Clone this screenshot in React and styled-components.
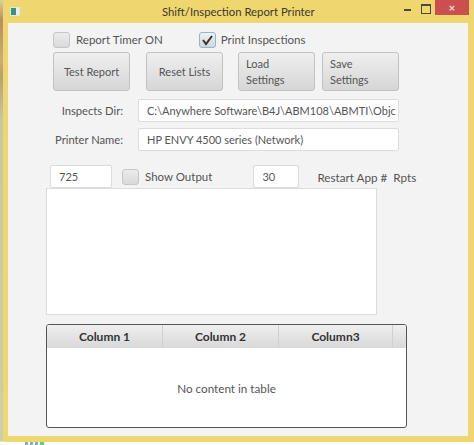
import React from 'react';
import styled, { createGlobalStyle } from 'styled-components';

const Global = createGlobalStyle`
  html, body { margin: 0; padding: 0; background: #ffffff; }
  body { width: 474px; height: 445px; overflow: hidden; font-family: Lato, "Noto Sans", sans-serif; }
  * { box-sizing: border-box; }
`;

const Desktop = styled.div`
  width: 474px;
  height: 445px;
  padding-left: 3px;
  background: linear-gradient(to bottom, #d8d0a0 0, #b98f5c 20px, #c9b070 60px, #b8a070 75px, #c4c8a8 120px, #c7d0b0 441px, #ffffff 442px);
`;

const Frame = styled.div`
  width: 471px;
  height: 442px;
  background: #efd66f;
  display: flex;
  flex-direction: column;
`;

const TitleBar = styled.div`
  height: 23px;
  flex: none;
  display: flex;
  align-items: center;
  position: relative;
`;

const AppIcon = styled.div`
  width: 10px;
  height: 9px;
  margin-left: 7px;
  margin-top: -1px;
  background: linear-gradient(to right, #3f8f83 0 60%, #e8eef0 60%);
  border: 1px solid #dfe6e6;
`;

const Title = styled.div`
  position: absolute;
  left: 159px;
  top: 3px;
  font-size: 11.3px;
  line-height: 17px;
  color: #3c3a2c;
  white-space: nowrap;
`;

const Controls = styled.div`
  margin-left: auto;
  margin-right: 5px;
  height: 15px;
  align-self: flex-start;
  display: flex;
`;

const MinButton = styled.div`
  width: 17px;
  position: relative;
  &::after { content: ''; position: absolute; left: 0; top: 9px; width: 7px; height: 2px; background: #4a4a3c; }
`;

const MaxButton = styled.div`
  width: 14px;
  position: relative;
  &::after { content: ''; position: absolute; left: 0; top: 4px; width: 8px; height: 7px; border: 1px solid #4a4a3c; border-top-width: 2px; }
`;

const CloseButton = styled.div`
  width: 34px;
  background: #c9504f;
  color: #f6e4e0;
  font-size: 11px;
  font-weight: 700;
  line-height: 15px;
  text-align: center;
`;

const Body = styled.div`
  width: 460px;
  height: 413px;
  margin-left: 5px;
  background: #f3f3f3;
  padding: 9px 0 0 38px;
  color: #555555;
  font-size: 11.5px;
`;

const Row = styled.div`
  display: flex;
  align-items: center;
`;

const CheckRow = styled(Row)`
  height: 16px;
  margin-left: 7px;
`;

const CheckBox = styled.span`
  width: 17px;
  height: 16px;
  flex: none;
  margin-left: ${p => p.$ml || 0}px;
  border-radius: 3px;
  border: 1px solid ${p => (p.$checked ? '#7fbcd8' : '#c6c6c6')};
  background: ${p => (p.$checked ? 'linear-gradient(#f1f1f1, #d6d6d6)' : 'linear-gradient(#ececec, #d9d9d9)')};
  display: flex;
  align-items: center;
  justify-content: center;
`;

const CheckText = styled.span`
  margin-left: ${p => p.$gap || 6}px;
  line-height: 16px;
  white-space: nowrap;
`;

const ButtonRow = styled(Row)`
  margin: 4px 0 0 7px;
  height: 39px;
`;

const Button = styled.div`
  width: ${p => p.$w}px;
  height: 39px;
  margin-left: ${p => p.$ml || 0}px;
  border-radius: 3px;
  border: 1px solid #c2c2c2;
  background: linear-gradient(#efefef, #d6d6d6);
  font-size: 11px;
  line-height: 15.5px;
  display: flex;
  align-items: center;
  justify-content: ${p => (p.$wrap ? 'flex-start' : 'center')};
  padding-left: ${p => (p.$wrap ? 7 : 0)}px;
  white-space: pre-line;
`;

const FieldRow = styled(Row)`
  height: 23px;
  margin-top: ${p => p.$mt}px;
`;

const FieldLabel = styled.div`
  width: 92px;
  padding-right: 15px;
  text-align: right;
  font-size: 11.2px;
  white-space: nowrap;
`;

const Field = styled.div`
  width: ${p => p.$w}px;
  height: 23px;
  flex: none;
  background: #ffffff;
  border: 1px solid #dcdcdc;
  border-radius: 2px;
  padding-left: ${p => p.$pad || 8}px;
  margin-left: ${p => p.$ml || 0}px;
  font-size: 11px;
  line-height: 21px;
  white-space: nowrap;
  overflow: hidden;
`;

const OutputRow = styled(Row)`
  height: 23px;
  margin-top: 14px;
`;

const RestartLabel = styled.span`
  margin-left: 18px;
  white-space: pre;
  font-size: 11.7px;
`;

const OutputArea = styled.div`
  width: 331px;
  height: 127px;
  background: #ffffff;
  border: 1px solid #dddddd;
`;

const TableBox = styled.div`
  width: 361px;
  height: 104px;
  margin-top: 9px;
  background: #ffffff;
  border: 1px solid #555555;
  border-radius: 3px;
  overflow: hidden;
  display: flex;
  flex-direction: column;
`;

const TableHead = styled.div`
  height: 23px;
  flex: none;
  display: flex;
  background: linear-gradient(#efefef, #d8d8d8);
`;

const HeadCell = styled.div`
  width: ${p => p.$w}px;
  flex: none;
  border-right: 1px solid #d0d0d0;
  color: #333333;
  font-size: 12px;
  font-weight: 700;
  line-height: 23px;
  text-align: center;
`;

const Empty = styled.div`
  flex: 1;
  display: flex;
  align-items: center;
  justify-content: center;
  font-size: 11.7px;
  color: #555555;
`;

const Strip = styled.div`
  height: 3px;
  display: flex;
  gap: 2px;
  padding-left: 22px;
`;

const StripMark = styled.span`
  width: ${p => p.$w}px;
  height: 3px;
  background: ${p => p.$color};
`;

export default function App() {
  return (
    <Desktop>
      <Global />
      <Frame>
        <TitleBar>
          <AppIcon />
          <Title>Shift/Inspection Report Printer</Title>
          <Controls>
            <MinButton />
            <MaxButton />
            <CloseButton>×</CloseButton>
          </Controls>
        </TitleBar>
        <Body>
          <CheckRow>
            <CheckBox />
            <CheckText>Report Timer ON</CheckText>
            <CheckBox $checked $ml={36}>
              <svg width="13" height="12" viewBox="0 0 13 12">
                <path d="M2 6l3 4 6-8" fill="none" stroke="#333" strokeWidth="2" />
              </svg>
            </CheckBox>
            <CheckText $gap={5}>Print Inspections</CheckText>
          </CheckRow>
          <ButtonRow>
            <Button $w={77}>Test Report</Button>
            <Button $w={77} $ml={16}>Reset Lists</Button>
            <Button $w={77} $ml={15} $wrap>{'Load\nSettings'}</Button>
            <Button $w={77} $ml={7} $wrap>{'Save\nSettings'}</Button>
          </ButtonRow>
          <FieldRow $mt={8}>
            <FieldLabel>Inspects Dir:</FieldLabel>
            <Field $w={261}>C:\Anywhere Software\B4J\ABM108\ABMTI\Objc</Field>
          </FieldRow>
          <FieldRow $mt={6}>
            <FieldLabel>Printer Name:</FieldLabel>
            <Field $w={261}>HP ENVY 4500 series (Network)</Field>
          </FieldRow>
          <OutputRow>
            <Field $w={62} $ml={4}>725</Field>
            <CheckBox $ml={10} />
            <CheckText>Show Output</CheckText>
            <Field $w={46} $ml={41}>30</Field>
            <RestartLabel>Restart App #  Rpts</RestartLabel>
          </OutputRow>
          <OutputArea />
          <TableBox>
            <TableHead>
              <HeadCell $w={116}>Column 1</HeadCell>
              <HeadCell $w={116}>Column 2</HeadCell>
              <HeadCell $w={114}>Column3</HeadCell>
            </TableHead>
            <Empty>No content in table</Empty>
          </TableBox>
        </Body>
      </Frame>
      <Strip>
        <StripMark $w={3} $color="#7fb0b8" />
        <StripMark $w={3} $color="#7fb0b8" />
        <StripMark $w={3} $color="#7fb0b8" />
        <StripMark $w={4} $color="#5fd06f" />
      </Strip>
    </Desktop>
  );
}
